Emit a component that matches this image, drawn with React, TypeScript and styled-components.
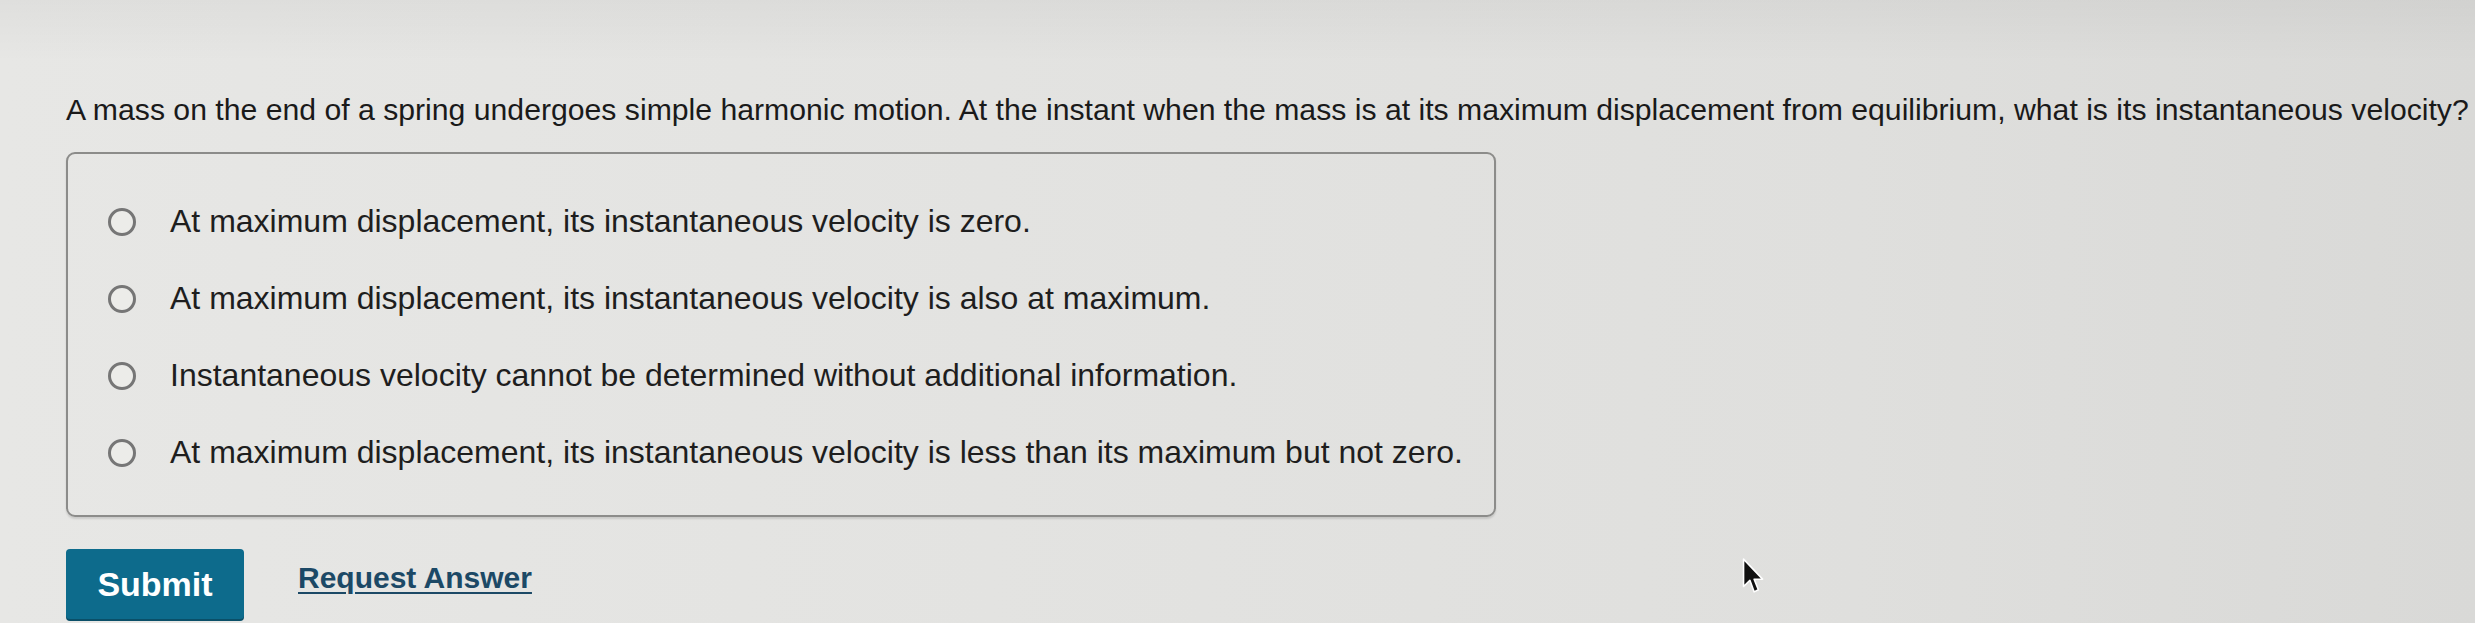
import React from "react";
import styled, { createGlobalStyle } from "styled-components";

const GlobalStyle = createGlobalStyle`
  html, body {
    margin: 0;
    padding: 0;
  }
  body {
    font-family: "Liberation Sans", Arial, Helvetica, sans-serif;
    color: #1f1f1f;
  }
`;

const Page = styled.div`
  position: relative;
  width: 2475px;
  height: 623px;
  overflow: hidden;
  box-sizing: border-box;
  padding: 91px 0 0 66px;
  background: linear-gradient(
    90deg,
    #e7e7e5 0%,
    #e3e3e1 40%,
    #dfdfdd 75%,
    #d9d9d7 100%
  );
`;

const TopBand = styled.div`
  position: absolute;
  left: 0;
  top: 0;
  width: 100%;
  height: 62px;
  background: linear-gradient(180deg, rgba(0, 0, 0, 0.035), rgba(0, 0, 0, 0));
  pointer-events: none;
`;

const Question = styled.p`
  margin: 0;
  font-size: 30.2px;
  line-height: 38px;
  white-space: nowrap;
  color: #1a1a1a;
`;

const ChoiceBox = styled.div`
  margin-top: 23px;
  width: 1430px;
  box-sizing: border-box;
  border: 2px solid #8c8c8a;
  border-radius: 9px;
  padding: 29px 0 24px 40px;
  box-shadow: 0 2px 2px rgba(0, 0, 0, 0.12);
  display: flex;
  flex-direction: column;
`;

const Choice = styled.label`
  display: flex;
  align-items: center;
  gap: 34px;
  height: 77px;
  font-size: 32px;
  color: #1e1e1e;
  cursor: pointer;
`;

const Radio = styled.span`
  flex: none;
  width: 28px;
  height: 28px;
  box-sizing: border-box;
  border-radius: 50%;
  border: 3px solid #767676;
  background: #ecece9;
`;

const Actions = styled.div`
  margin-top: 32px;
  display: flex;
  align-items: center;
  gap: 54px;
`;

const SubmitButton = styled.button`
  width: 178px;
  height: 70px;
  border: none;
  border-radius: 4px;
  background: #0d6b8c;
  box-shadow: 0 2px 0 #0a4f68;
  color: #ffffff;
  font-family: "Liberation Sans", Arial, sans-serif;
  font-weight: 700;
  font-size: 34px;
  padding: 0;
  cursor: pointer;
`;

const RequestLink = styled.a`
  font-size: 30px;
  font-weight: 700;
  color: #1c4966;
  text-decoration: underline;
  text-underline-offset: 4px;
  text-decoration-thickness: 2px;
  margin-top: -12px;
  cursor: pointer;
`;

const Cursor = styled.svg`
  position: absolute;
  left: 1739px;
  top: 557px;
  width: 26px;
  height: 38px;
`;

const choices = [
  "At maximum displacement, its instantaneous velocity is zero.",
  "At maximum displacement, its instantaneous velocity is also at maximum.",
  "Instantaneous velocity cannot be determined without additional information.",
  "At maximum displacement, its instantaneous velocity is less than its maximum but not zero.",
];

export default function App() {
  return (
    <>
      <GlobalStyle />
      <Page>
        <TopBand />
        <Question>
          A mass on the end of a spring undergoes simple harmonic motion. At the instant when the mass is at its maximum displacement from equilibrium, what is its instantaneous velocity?
        </Question>
        <ChoiceBox>
          {choices.map((c) => (
            <Choice key={c}>
              <Radio />
              <span>{c}</span>
            </Choice>
          ))}
        </ChoiceBox>
        <Actions>
          <SubmitButton>Submit</SubmitButton>
          <RequestLink>Request Answer</RequestLink>
        </Actions>
        <Cursor viewBox="0 0 24 36">
          <path
            d="M4 2 L4 28 L10 22 L14 33 L18 31 L14 21 L22 21 Z"
            fill="#111"
            stroke="#fff"
            strokeWidth="1.5"
            strokeLinejoin="round"
          />
        </Cursor>
      </Page>
    </>
  );
}
